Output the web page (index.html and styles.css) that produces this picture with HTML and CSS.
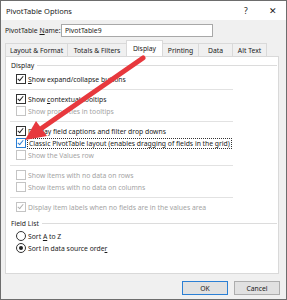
FILE: index.html
```html
<!DOCTYPE html>
<html lang="en">
<head>
    <meta charset="UTF-8">
    <meta name="viewport" content="width=device-width, initial-scale=1.0">
    <title>PivotTable Options</title>
    <link rel="stylesheet" href="styles.css">
</head>
<body>
    <div class="dialog">
        <div class="titlebar">
            <span class="title">PivotTable Options</span>
            <span class="help">?</span>
            <span class="close">&#x2715;</span>
        </div>

        <div class="name-row">
            <label class="name-label">PivotTable <u>N</u>ame:</label>
            <div class="name-input">PivotTable9</div>
        </div>

        <div class="tabs">
            <div class="tab t-layout">Layout &amp; Format</div>
            <div class="tab t-totals">Totals &amp; Filters</div>
            <div class="tab t-display active">Display</div>
            <div class="tab t-print">Printing</div>
            <div class="tab t-data">Data</div>
            <div class="tab t-alt">Alt Text</div>
        </div>

        <div class="panel">
            <div class="group-head"><span>Display</span><i class="rule"></i></div>
            <div class="opt"><span class="cb on"></span><span><u>S</u>how expand/collapse buttons</span></div>
            <div class="sep"></div>
            <div class="opt"><span class="cb on"></span><span>Show <u>c</u>ontextual tooltips</span></div>
            <div class="opt off"><span class="cb"></span><span>Show properties in tooltips</span></div>
            <div class="sep"></div>
            <div class="opt"><span class="cb on"></span><span>Display field captions and filter drop downs</span></div>
            <div class="opt"><span class="cb on focus"></span><span class="focus-text">Classic PivotTable layout (enables dragging of fields in the grid)</span></div>
            <div class="opt off"><span class="cb"></span><span>Show the Values row</span></div>
            <div class="sep"></div>
            <div class="opt off"><span class="cb"></span><span>Show items with no data on rows</span></div>
            <div class="opt off"><span class="cb"></span><span>Show items with no data on columns</span></div>
            <div class="sep"></div>
            <div class="opt off"><span class="cb on"></span><span>Display item labels when no fields are in the values area</span></div>

            <div class="group-head field-head"><span>Field List</span><i class="rule"></i></div>
            <div class="opt"><span class="rb"></span><span>Sort <u>A</u> to Z</span></div>
            <div class="opt"><span class="rb on"></span><span>Sort in data source orde<u>r</u></span></div>
        </div>

        <div class="footer">
            <button class="btn ok">OK</button>
            <button class="btn">Cancel</button>
        </div>

        <svg class="arrow" width="287" height="300" viewBox="0 0 287 300">
            <line x1="143" y1="58" x2="42" y2="128" stroke="#e7383d" stroke-width="5" stroke-linecap="round"/>
            <polygon points="25,140 47,136 36,121" fill="#e7383d"/>
        </svg>
    </div>
</body>
</html>
```

FILE: styles.css
```css
body {
    margin: 0;
    font-family: "Noto Sans", "Open Sans", sans-serif;
    font-size: 6.8px;
    color: #1a1a1a;
}

.dialog {
    position: relative;
    width: 287px;
    height: 300px;
    box-sizing: border-box;
    border: 1px solid #6d6d6d;
    background-color: #f0f0f0;
}

.titlebar {
    display: flex;
    align-items: center;
    height: 19px;
    padding-left: 5px;
    background-color: #fff;
}

.title {
    flex: 1;
    font-size: 7.5px;
}

.help {
    width: 25px;
    font-size: 8.5px;
}

.close {
    width: 17px;
    font-size: 9px;
}

.name-row {
    display: flex;
    align-items: center;
    height: 20px;
    padding-left: 4px;
}

.name-label {
    width: 56px;
    white-space: nowrap;
}

.name-input {
    width: 147px;
    height: 11px;
    line-height: 11px;
    padding-left: 3px;
    border: 1px solid #a8a8a8;
    background-color: #fff;
}

.tabs {
    display: flex;
    align-items: flex-end;
    height: 16px;
    padding-left: 4px;
}

.tab {
    height: 13px;
    line-height: 13px;
    box-sizing: border-box;
    text-align: center;
    white-space: nowrap;
    border: 1px solid #d9d9d9;
    border-bottom: none;
    border-left: none;
    background-color: #f0f0f0;
}

.t-layout { width: 63px; border-left: 1px solid #d9d9d9; }
.t-totals { width: 59px; }
.t-display { width: 37px; }
.t-print { width: 36px; }
.t-data { width: 34px; }
.t-alt { width: 34px; }

.tab.active {
    height: 16px;
    line-height: 16px;
    background-color: #fff;
    border-left: 1px solid #d9d9d9;
    margin-left: -1px;
}

.panel {
    box-sizing: border-box;
    width: 274px;
    height: 218px;
    margin-left: 4px;
    border: 1px solid #d9d9d9;
    background-color: #fff;
}

.group-head {
    display: flex;
    align-items: center;
    height: 12px;
    margin-top: 2px;
    padding-left: 5px;
}

.group-head .rule {
    flex: 1;
    height: 1px;
    margin-left: 3px;
    margin-right: 1px;
    background-color: #dcdcdc;
}

.field-head {
    margin-top: 4px;
}

.opt {
    display: flex;
    align-items: center;
    height: 12px;
    padding-left: 10px;
    white-space: nowrap;
}

.group-head + .opt {
    margin-top: 2px;
}

.field-head + .opt {
    margin-top: 1px;
}

.opt.off {
    color: #a3a3a3;
}

.cb, .rb {
    position: relative;
    width: 8px;
    height: 8px;
    margin-right: 2px;
    border: 1px solid #333;
    background-color: #fff;
    flex-shrink: 0;
}

.opt.off .cb {
    border-color: #c4c4c4;
}

.cb.on::after {
    content: "";
    position: absolute;
    left: 2.3px;
    top: 0;
    width: 2.3px;
    height: 5px;
    border: solid #222;
    border-width: 0 1.2px 1.2px 0;
    transform: rotate(40deg);
}

.opt.off .cb.on::after {
    border-color: #b0b0b0;
}

.cb.focus {
    border-color: #2b7fd4;
}

.cb.focus::after {
    border-color: #2b7fd4;
}

.focus-text {
    outline: 1px dotted #333;
    padding: 0 1px;
}

.rb {
    border-radius: 50%;
}

.rb.on::after {
    content: "";
    position: absolute;
    left: 2px;
    top: 2px;
    width: 4px;
    height: 4px;
    border-radius: 50%;
    background-color: #222;
}

.sep {
    height: 1px;
    width: 223px;
    margin: 4px 0 3px 4px;
    background-color: #e2e2e2;
}

.footer {
    display: flex;
    justify-content: flex-end;
    gap: 6px;
    padding: 7px 6px 0 0;
}

.btn {
    width: 46px;
    height: 14px;
    padding: 0;
    font-family: inherit;
    font-size: 6.8px;
    color: #1a1a1a;
    border: 1px solid #adadad;
    background-color: #e1e1e1;
}

.btn.ok {
    border-color: #2b7fd4;
}

.arrow {
    position: absolute;
    left: -1px;
    top: -1px;
    pointer-events: none;
}
```
